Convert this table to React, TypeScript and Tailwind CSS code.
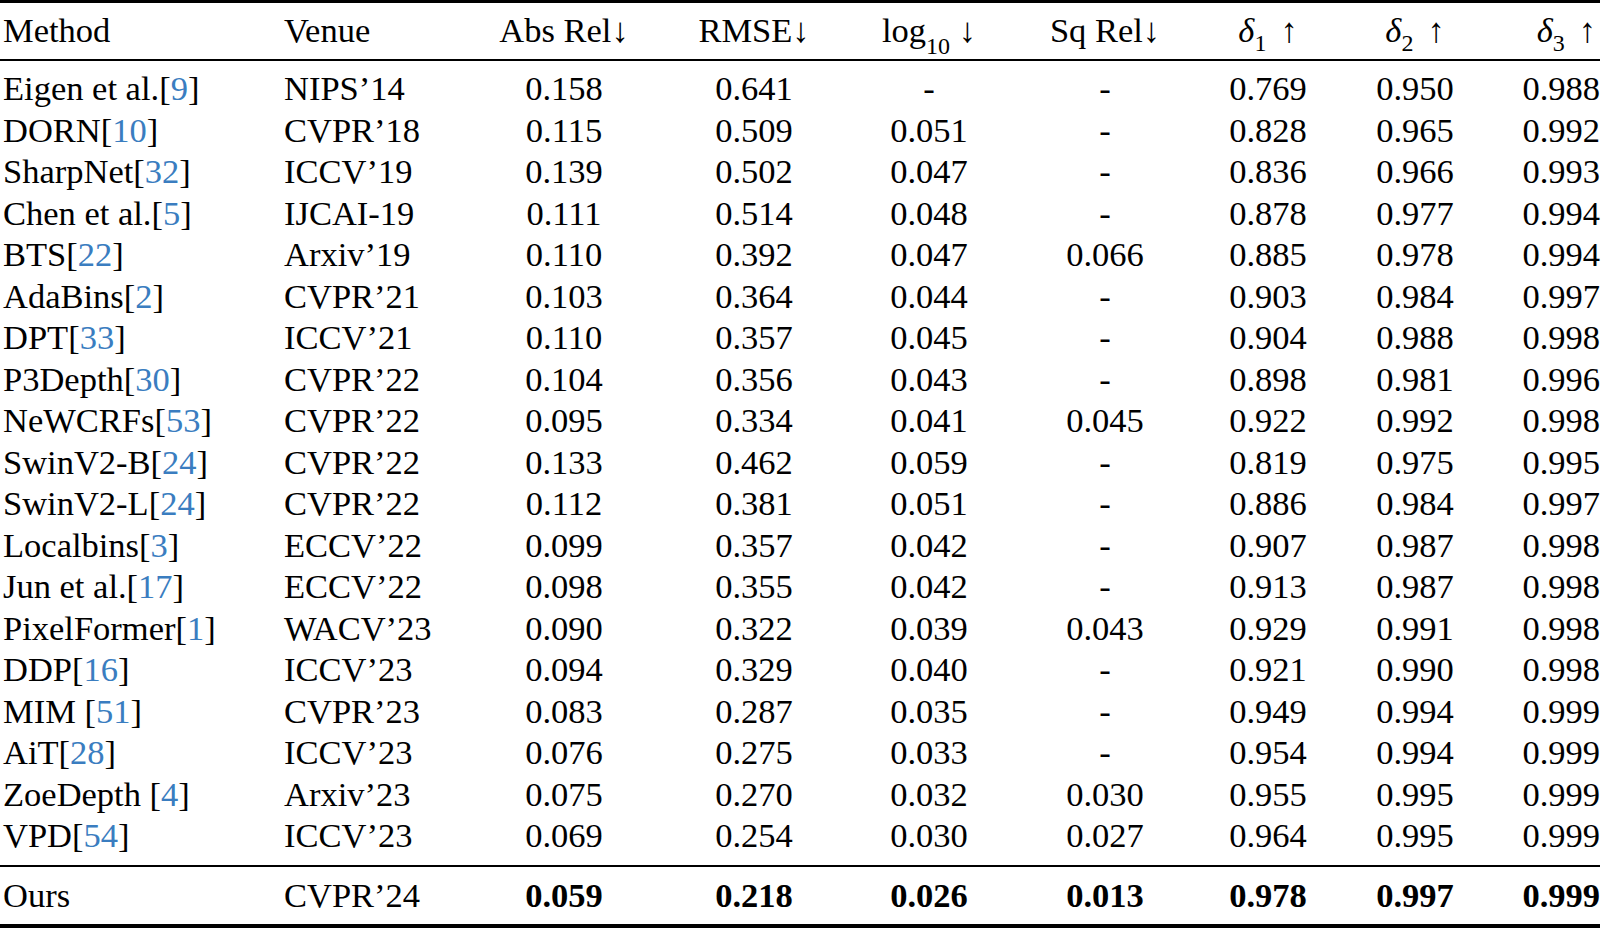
const cite = "text-[#3a7dc0]";

type Row = {
  name: string;
  ref: string;
  sp?: boolean;
  venue: string;
  vals: string[];
};

const rows: Row[] = [
  { name: "Eigen et al.", ref: "9", venue: "NIPS’14", vals: ["0.158", "0.641", "-", "-", "0.769", "0.950", "0.988"] },
  { name: "DORN", ref: "10", venue: "CVPR’18", vals: ["0.115", "0.509", "0.051", "-", "0.828", "0.965", "0.992"] },
  { name: "SharpNet", ref: "32", venue: "ICCV’19", vals: ["0.139", "0.502", "0.047", "-", "0.836", "0.966", "0.993"] },
  { name: "Chen et al.", ref: "5", venue: "IJCAI-19", vals: ["0.111", "0.514", "0.048", "-", "0.878", "0.977", "0.994"] },
  { name: "BTS", ref: "22", venue: "Arxiv’19", vals: ["0.110", "0.392", "0.047", "0.066", "0.885", "0.978", "0.994"] },
  { name: "AdaBins", ref: "2", venue: "CVPR’21", vals: ["0.103", "0.364", "0.044", "-", "0.903", "0.984", "0.997"] },
  { name: "DPT", ref: "33", venue: "ICCV’21", vals: ["0.110", "0.357", "0.045", "-", "0.904", "0.988", "0.998"] },
  { name: "P3Depth", ref: "30", venue: "CVPR’22", vals: ["0.104", "0.356", "0.043", "-", "0.898", "0.981", "0.996"] },
  { name: "NeWCRFs", ref: "53", venue: "CVPR’22", vals: ["0.095", "0.334", "0.041", "0.045", "0.922", "0.992", "0.998"] },
  { name: "SwinV2-B", ref: "24", venue: "CVPR’22", vals: ["0.133", "0.462", "0.059", "-", "0.819", "0.975", "0.995"] },
  { name: "SwinV2-L", ref: "24", venue: "CVPR’22", vals: ["0.112", "0.381", "0.051", "-", "0.886", "0.984", "0.997"] },
  { name: "Localbins", ref: "3", venue: "ECCV’22", vals: ["0.099", "0.357", "0.042", "-", "0.907", "0.987", "0.998"] },
  { name: "Jun et al.", ref: "17", venue: "ECCV’22", vals: ["0.098", "0.355", "0.042", "-", "0.913", "0.987", "0.998"] },
  { name: "PixelFormer", ref: "1", venue: "WACV’23", vals: ["0.090", "0.322", "0.039", "0.043", "0.929", "0.991", "0.998"] },
  { name: "DDP", ref: "16", venue: "ICCV’23", vals: ["0.094", "0.329", "0.040", "-", "0.921", "0.990", "0.998"] },
  { name: "MIM", ref: "51", sp: true, venue: "CVPR’23", vals: ["0.083", "0.287", "0.035", "-", "0.949", "0.994", "0.999"] },
  { name: "AiT", ref: "28", venue: "ICCV’23", vals: ["0.076", "0.275", "0.033", "-", "0.954", "0.994", "0.999"] },
  { name: "ZoeDepth", ref: "4", sp: true, venue: "Arxiv’23", vals: ["0.075", "0.270", "0.032", "0.030", "0.955", "0.995", "0.999"] },
  { name: "VPD", ref: "54", venue: "ICCV’23", vals: ["0.069", "0.254", "0.030", "0.027", "0.964", "0.995", "0.999"] },
];

const grid =
  "grid grid-cols-[281px_186px_188px_192px_158px_194px_132px_162px_1fr] pl-[3px] items-center";

function Delta({ n }: { n: string }) {
  return (
    <span className="whitespace-nowrap">
      <i>δ</i>
      <sub className="text-[24px] align-[-3px]">{n}</sub>
      <span className="ml-[14px]">↑</span>
    </span>
  );
}

function Cells({ vals, bold }: { vals: string[]; bold?: boolean }) {
  return (
    <>
      {vals.map((v, i) => (
        <div key={i} className={(i === 6 ? "text-right" : "text-center") + (bold ? " font-bold" : "")}>
          {v}
        </div>
      ))}
    </>
  );
}

export default function App() {
  return (
    <div className="w-[1603px] h-[929px] bg-white overflow-hidden">
      <div
        className="w-[1600px] text-[34.5px] leading-[41.5px] text-black"
        style={{ fontFamily: '"Liberation Serif", "Times New Roman", serif' }}
      >
        <div className="border-t-[3px] border-black" />
        <div className={grid + " h-[56px]"}>
          <div>Method</div>
          <div>Venue</div>
          <div className="text-center">Abs Rel↓</div>
          <div className="text-center">RMSE↓</div>
          <div className="text-center whitespace-nowrap">
            log<sub className="text-[24px] align-[-6px]">10</sub> ↓
          </div>
          <div className="text-center">Sq Rel↓</div>
          <div className="text-center"><Delta n="1" /></div>
          <div className="text-center"><Delta n="2" /></div>
          <div className="text-right pr-[4px]"><Delta n="3" /></div>
        </div>
        <div className="border-t-2 border-black" />
        <div className="pt-[7px] pb-[8px]">
          {rows.map((r) => (
            <div key={r.name} className={grid + " h-[41.5px]"}>
              <div className="whitespace-nowrap">
                {r.name}
                {r.sp ? " " : ""}[<span className={cite}>{r.ref}</span>]
              </div>
              <div>{r.venue}</div>
              <Cells vals={r.vals} />
            </div>
          ))}
        </div>
        <div className="border-t-2 border-black" />
        <div className="pt-[8px] pb-[8px]">
          <div className={grid + " h-[41.5px]"}>
            <div>Ours</div>
            <div>CVPR’24</div>
            <Cells vals={["0.059", "0.218", "0.026", "0.013", "0.978", "0.997", "0.999"]} bold />
          </div>
        </div>
        <div className="border-t-4 border-black" />
      </div>
    </div>
  );
}
